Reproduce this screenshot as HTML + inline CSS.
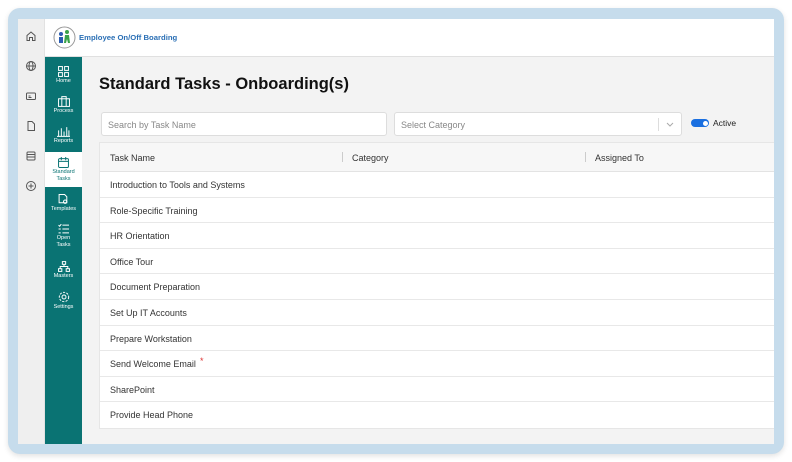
<!DOCTYPE html>
<html><head><meta charset="utf-8"><style>
*{margin:0;padding:0;box-sizing:border-box}
body{width:792px;height:462px;background:#fff;font-family:"Liberation Sans",sans-serif;position:relative;overflow:hidden}
.frame{position:absolute;left:8px;top:8px;width:776px;height:446px;background:#c6dcec;border-radius:12px;box-shadow:0 2px 6px rgba(0,0,0,.12)}
.inner{position:absolute;left:18px;top:19px;width:756px;height:425px;background:#f3f3f3;overflow:hidden}
.rail{position:absolute;left:0;top:0;width:27px;height:425px;background:#efefef;border-right:1px solid #e2e2e2}
.rail svg{position:absolute;left:7px}
.header{position:absolute;left:27px;top:0;right:0;height:38px;background:#fff;border-bottom:1px solid #e0e0e0}
.side{position:absolute;left:27px;top:38px;width:37px;bottom:0;background:#0a7373}
.nav{position:absolute;left:0;width:37px;text-align:center;color:#fff;font-size:5.5px;line-height:7px}
.nav svg{display:block;margin:0 auto 1px}
.nav.act{background:#fff;color:#0a7373}
h1{position:absolute;left:81px;top:56px;font-size:16.5px;font-weight:bold;color:#111}
.inp{position:absolute;top:93px;height:24px;background:#fff;border:1px solid #ddd;border-radius:3px;font-size:9px;color:#888;padding:7px 6px}
.table{position:absolute;left:81px;top:123px;width:680px;height:287px;background:#fff;border:1px solid #e6e6e6}
.th{height:29px;background:#f7f7f7;border-bottom:1px solid #e3e3e3;position:relative;font-size:9px;color:#333}
.th span{position:absolute;top:10px}
.row{height:25.6px;border-bottom:1px solid #e8e8e8;font-size:9px;line-height:10px;color:#333;padding:8px 0 0 10px;position:relative}
</style></head><body>
<div class="frame"></div>
<div class="inner">
 <div class="rail">
  <svg style="top:11px" width="12" height="12" viewBox="0 0 12 12" fill="none" stroke="#555" stroke-width="1"><path d="M2 5.5L6 2l4 3.5V10.5H7.5V7.5h-3v3H2z"/></svg>
  <svg style="top:41px" width="12" height="12" viewBox="0 0 12 12" fill="none" stroke="#555" stroke-width="1"><circle cx="6" cy="6" r="4.5"/><ellipse cx="6" cy="6" rx="2" ry="4.5"/><path d="M1.5 6h9"/></svg>
  <svg style="top:71px" width="12" height="12" viewBox="0 0 12 12" fill="none" stroke="#555" stroke-width="1"><rect x="1.5" y="3" width="9" height="6.5" rx="1"/><path d="M3.5 6h2M3.5 7.5h3"/></svg>
  <svg style="top:101px" width="12" height="12" viewBox="0 0 12 12" fill="none" stroke="#555" stroke-width="1"><path d="M3 1.5h4l2.5 2.5v6.5H3z"/></svg>
  <svg style="top:131px" width="12" height="12" viewBox="0 0 12 12" fill="none" stroke="#555" stroke-width="1"><rect x="2" y="2" width="8" height="8" rx="1"/><path d="M2 4.5h8M2 7h8"/></svg>
  <svg style="top:161px" width="12" height="12" viewBox="0 0 12 12" fill="none" stroke="#555" stroke-width="1"><circle cx="6" cy="6" r="4.5"/><path d="M6 3.5v5M3.5 6h5"/></svg>
 </div>
 <div class="header">
  <svg style="position:absolute;left:8px;top:7px" width="23" height="23" viewBox="0 0 23 23"><circle cx="11.5" cy="11.5" r="10.5" fill="#fff" stroke="#999"/><circle cx="8" cy="8" r="2" fill="#2a5db0"/><path d="M6 11h4v6H6z" fill="#2a5db0"/><circle cx="14" cy="6" r="2" fill="#3aa34a"/><path d="M12 9h4l1 8h-2l-1-4-1 4h-2z" fill="#3aa34a"/></svg>
  <div style="position:absolute;left:34px;top:14px;font-size:7.7px;font-weight:bold;color:#2a6fb5">Employee On/Off Boarding</div>
 </div>
 <div class="side">
  <div class="nav" style="top:9px"><svg width="11" height="11" viewBox="0 0 10 10" fill="none" stroke="#fff" stroke-width=".9"><rect x=".5" y=".5" width="3.5" height="3.5"/><rect x="6" y=".5" width="3.5" height="3.5"/><rect x=".5" y="6" width="3.5" height="3.5"/><rect x="6" y="6" width="3.5" height="3.5"/></svg>Home</div>
  <div class="nav" style="top:39px"><svg width="12" height="11" viewBox="0 0 11 10" fill="none" stroke="#fff" stroke-width=".9"><rect x=".5" y="2.5" width="10" height="7"/><path d="M3.5 2.5V.5h4v2M3.5 2.5v7M7.5 2.5v7"/></svg>Process</div>
  <div class="nav" style="top:69px"><svg width="13" height="11" viewBox="0 0 12 10" fill="none" stroke="#fff" stroke-width=".9"><path d="M0 9.5h12M1.5 9V4M4 9V2M6.5 9V5M9 9V1M11 9V4"/></svg>Reports</div>
  <div class="nav act" style="top:95px;height:35px;padding-top:5px"><svg width="11" height="11" viewBox="0 0 10 10" fill="none" stroke="#0a7373" stroke-width=".9"><rect x=".5" y="1.5" width="9" height="8" rx="1"/><path d="M.5 4h9M3 0v3M7 0v3"/></svg>Standard<br>Tasks</div>
  <div class="nav" style="top:137px"><svg width="11" height="11" viewBox="0 0 10 10" fill="none" stroke="#fff" stroke-width=".9"><path d="M1 .5h5l2 2V8H1z"/><circle cx="6.5" cy="7" r="1.5"/></svg>Templates</div>
  <div class="nav" style="top:167px"><svg width="11" height="10" viewBox="0 0 10 9" fill="none" stroke="#fff" stroke-width=".9"><path d="M4 1h6M4 4.5h6M4 8h6M.5 1l1 1 1.5-2M.5 4.5h2M.5 8h2"/></svg>Open<br>Tasks</div>
  <div class="nav" style="top:204px"><svg width="12" height="11" viewBox="0 0 11 10" fill="none" stroke="#fff" stroke-width=".9"><rect x="4" y=".5" width="3" height="2.5"/><rect x=".5" y="7" width="3" height="2.5"/><rect x="7.5" y="7" width="3" height="2.5"/><path d="M5.5 3v2M2 7V5h7v2"/></svg>Masters</div>
  <div class="nav" style="top:234px"><svg width="12" height="12" viewBox="0 0 11 11" fill="none" stroke="#fff" stroke-width=".9"><circle cx="5.5" cy="5.5" r="1.8"/><circle cx="5.5" cy="5.5" r="4.3" stroke-dasharray="2 1.2"/></svg>Settings</div>
 </div>
 <h1>Standard Tasks - Onboarding(s)</h1>
 <div class="inp" style="left:83px;width:286px">Search by Task Name</div>
 <div class="inp" style="left:376px;width:288px">Select Category<span style="position:absolute;right:22px;top:5px;width:1px;height:13px;background:#ddd"></span><svg style="position:absolute;right:7px;top:9px" width="8" height="5" viewBox="0 0 8 5" fill="none" stroke="#aaa"><path d="M1 1l3 3 3-3"/></svg></div>
 <div style="position:absolute;left:673px;top:100px;width:18px;height:8px;border-radius:4px;background:#1a6fe0"><div style="position:absolute;right:1.5px;top:1.5px;width:5px;height:5px;border-radius:50%;background:#fff"></div></div>
 <div style="position:absolute;left:695px;top:99px;font-size:8.5px;color:#222">Active</div>
 <div class="table">
  <div class="th"><span style="left:10px">Task Name</span><i style="position:absolute;left:242px;top:9px;width:1px;height:10px;background:#ccc"></i><span style="left:252px">Category</span><i style="position:absolute;left:485px;top:9px;width:1px;height:10px;background:#ccc"></i><span style="left:495px">Assigned To</span></div>
  <div class="row">Introduction to Tools and Systems</div>
  <div class="row">Role-Specific Training</div>
  <div class="row">HR Orientation</div>
  <div class="row">Office Tour</div>
  <div class="row">Document Preparation</div>
  <div class="row">Set Up IT Accounts</div>
  <div class="row">Prepare Workstation</div>
  <div class="row">Send Welcome Email<span style="position:absolute;left:100px;top:5px;color:#d33;font-size:9px">*</span></div>
  <div class="row">SharePoint</div>
  <div class="row" style="border-bottom:none">Provide Head Phone</div>
 </div>
</div>
</body></html>
